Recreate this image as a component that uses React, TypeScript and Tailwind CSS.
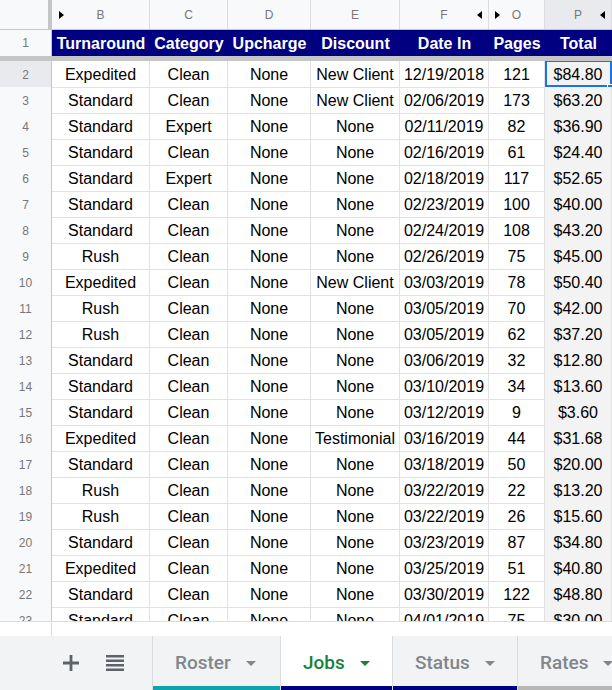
import React from "react";

const GRID = "grid grid-cols-[52px_98px_78px_83px_89px_89px_56px_67px]";

const rows: string[][] = [
  ["Expedited", "Clean", "None", "New Client", "12/19/2018", "121", "$84.80"],
  ["Standard", "Clean", "None", "New Client", "02/06/2019", "173", "$63.20"],
  ["Standard", "Expert", "None", "None", "02/11/2019", "82", "$36.90"],
  ["Standard", "Clean", "None", "None", "02/16/2019", "61", "$24.40"],
  ["Standard", "Expert", "None", "None", "02/18/2019", "117", "$52.65"],
  ["Standard", "Clean", "None", "None", "02/23/2019", "100", "$40.00"],
  ["Standard", "Clean", "None", "None", "02/24/2019", "108", "$43.20"],
  ["Rush", "Clean", "None", "None", "02/26/2019", "75", "$45.00"],
  ["Expedited", "Clean", "None", "New Client", "03/03/2019", "78", "$50.40"],
  ["Rush", "Clean", "None", "None", "03/05/2019", "70", "$42.00"],
  ["Rush", "Clean", "None", "None", "03/05/2019", "62", "$37.20"],
  ["Standard", "Clean", "None", "None", "03/06/2019", "32", "$12.80"],
  ["Standard", "Clean", "None", "None", "03/10/2019", "34", "$13.60"],
  ["Standard", "Clean", "None", "None", "03/12/2019", "9", "$3.60"],
  ["Expedited", "Clean", "None", "Testimonial", "03/16/2019", "44", "$31.68"],
  ["Standard", "Clean", "None", "None", "03/18/2019", "50", "$20.00"],
  ["Rush", "Clean", "None", "None", "03/22/2019", "22", "$13.20"],
  ["Rush", "Clean", "None", "None", "03/22/2019", "26", "$15.60"],
  ["Standard", "Clean", "None", "None", "03/23/2019", "87", "$34.80"],
  ["Expedited", "Clean", "None", "None", "03/25/2019", "51", "$40.80"],
  ["Standard", "Clean", "None", "None", "03/30/2019", "122", "$48.80"],
  ["Standard", "Clean", "None", "None", "04/01/2019", "75", "$30.00"],
];

const headers = ["Turnaround", "Category", "Upcharge", "Discount", "Date In", "Pages", "Total"];

// little black arrows that mark hidden columns
function ArrowRight({ className }: { className: string }) {
  return (
    <svg className={`absolute ${className}`} width="5" height="8" viewBox="0 0 5 8">
      <path d="M0 0 L5 4 L0 8 Z" fill="#000" />
    </svg>
  );
}

function ArrowLeft({ className }: { className: string }) {
  return (
    <svg className={`absolute ${className}`} width="5" height="8" viewBox="0 0 5 8">
      <path d="M5 0 L0 4 L5 8 Z" fill="#000" />
    </svg>
  );
}

function Caret({ color }: { color: string }) {
  return (
    <svg width="10" height="5" viewBox="0 0 10 5">
      <path d="M0 0 L10 0 L5 5 Z" fill={color} />
    </svg>
  );
}

function Tab({ label, width, active, underline }: { label: string; width: string; active?: boolean; underline: string }) {
  return (
    <div className={`relative flex h-full shrink-0 items-center gap-[15px] border-r border-[#dadce0] pl-[22px] ${width} ${active ? "bg-white" : "bg-[#f1f3f4]"}`}>
      <span className={`text-[19px] font-medium ${active ? "text-[#188038]" : "text-[#80868b]"}`}>{label}</span>
      <Caret color={active ? "#188038" : "#80868b"} />
      <div className={`absolute bottom-0 left-0 right-0 h-[4px] ${underline}`} />
    </div>
  );
}

export default function App() {
  return (
    <div className="flex h-[690px] w-[612px] flex-col overflow-hidden bg-white font-['Liberation_Sans',Arial,sans-serif]">
      {/* column letters */}
      <div className={`${GRID} h-[30px] shrink-0 border-b border-[#c4c7c5] text-[12px] text-[#777]`}>
        <div className="border-r-4 border-[#c4c7c5] bg-[#f8f9fa]" />
        {["B", "C", "D", "E", "F", "O", "P"].map((c) => (
          <div
            key={c}
            className={`relative flex items-center justify-center border-r border-[#dadce0] ${c === "P" ? "bg-[#e8eaed]" : "bg-[#f8f9fa]"}`}
          >
            {c}
            {c === "B" && <ArrowRight className="left-[7px] top-[11px]" />}
            {c === "F" && <ArrowLeft className="right-[6px] top-[11px]" />}
            {c === "O" && <ArrowRight className="left-[6px] top-[11px]" />}
            {c === "P" && <ArrowLeft className="right-[6px] top-[11px]" />}
          </div>
        ))}
      </div>

      {/* frozen header row */}
      <div className={`${GRID} h-[26px] shrink-0`}>
        <div className="flex items-center justify-center border-r border-[#c4c7c5] bg-[#f8f9fa] text-[12px] text-[#777]">1</div>
        {headers.map((h) => (
          <div key={h} className="flex items-center justify-center whitespace-nowrap bg-[#000080] pt-px text-[16px] font-bold text-white">
            {h}
          </div>
        ))}
      </div>
      <div className="h-[5px] shrink-0 bg-[#c4c7c5]" />

      {/* data rows */}
      <div className="h-[560px] shrink-0 overflow-hidden">
        {rows.map((r, i) => (
          <div key={i} className={`${GRID} h-[26px]`}>
            <div
              className={`flex items-center justify-center border-b border-r border-[#c4c7c5] border-b-[#e2e2e2] pt-px text-[12px] text-[#777] ${i === 0 ? "bg-[#e8eaed]" : "bg-[#f8f9fa]"}`}
            >
              {i + 2}
            </div>
            {r.map((v, j) => (
              <div
                key={j}
                className={`relative flex items-center justify-center whitespace-nowrap border-b border-r border-[#e2e2e2] pt-[2px] text-[16px] text-black ${j === 6 ? "bg-[#f3f3f3]" : ""}`}
              >
                {v}
                {i === 0 && j === 6 && (
                  <>
                    <div className="absolute -top-px left-0 -right-px bottom-0 border-2 border-[#1a73e8]" />
                    <div className="absolute -bottom-[4px] -right-[3px] h-[7px] w-[7px] border border-white bg-[#1a73e8]" />
                  </>
                )}
              </div>
            ))}
          </div>
        ))}
      </div>

      {/* scroll strip */}
      <div className="flex h-[15px] shrink-0 border-t border-[#dadce0]">
        <div className="w-[52px] border-r border-[#dadce0]" />
      </div>

      {/* sheet tabs */}
      <div className="flex h-[54px] shrink-0 bg-[#f1f3f4] font-['Roboto',sans-serif]">
        <div className="flex w-[153px] shrink-0 items-center border-r border-[#dadce0]">
          <svg className="ml-[63px]" width="16" height="16" viewBox="0 0 16 16">
            <path d="M6.6 0h2.8v16H6.6z M0 6.6h16v2.8H0z" fill="#5f6368" />
          </svg>
          <svg className="ml-[27px]" width="18" height="16" viewBox="0 0 18 16">
            <path d="M0 0h18v2.6H0z M0 4.5h18v2.6H0z M0 9h18v2.6H0z M0 13.4h18V16H0z" fill="#5f6368" />
          </svg>
        </div>
        <Tab label="Roster" width="w-[128px]" underline="bg-[#0fa3ae]" />
        <Tab label="Jobs" width="w-[112px]" active underline="bg-[#000080]" />
        <Tab label="Status" width="w-[125px]" underline="bg-[#000080]" />
        <Tab label="Rates" width="w-[110px]" underline="bg-[#b7b7b7]" />
      </div>
    </div>
  );
}
